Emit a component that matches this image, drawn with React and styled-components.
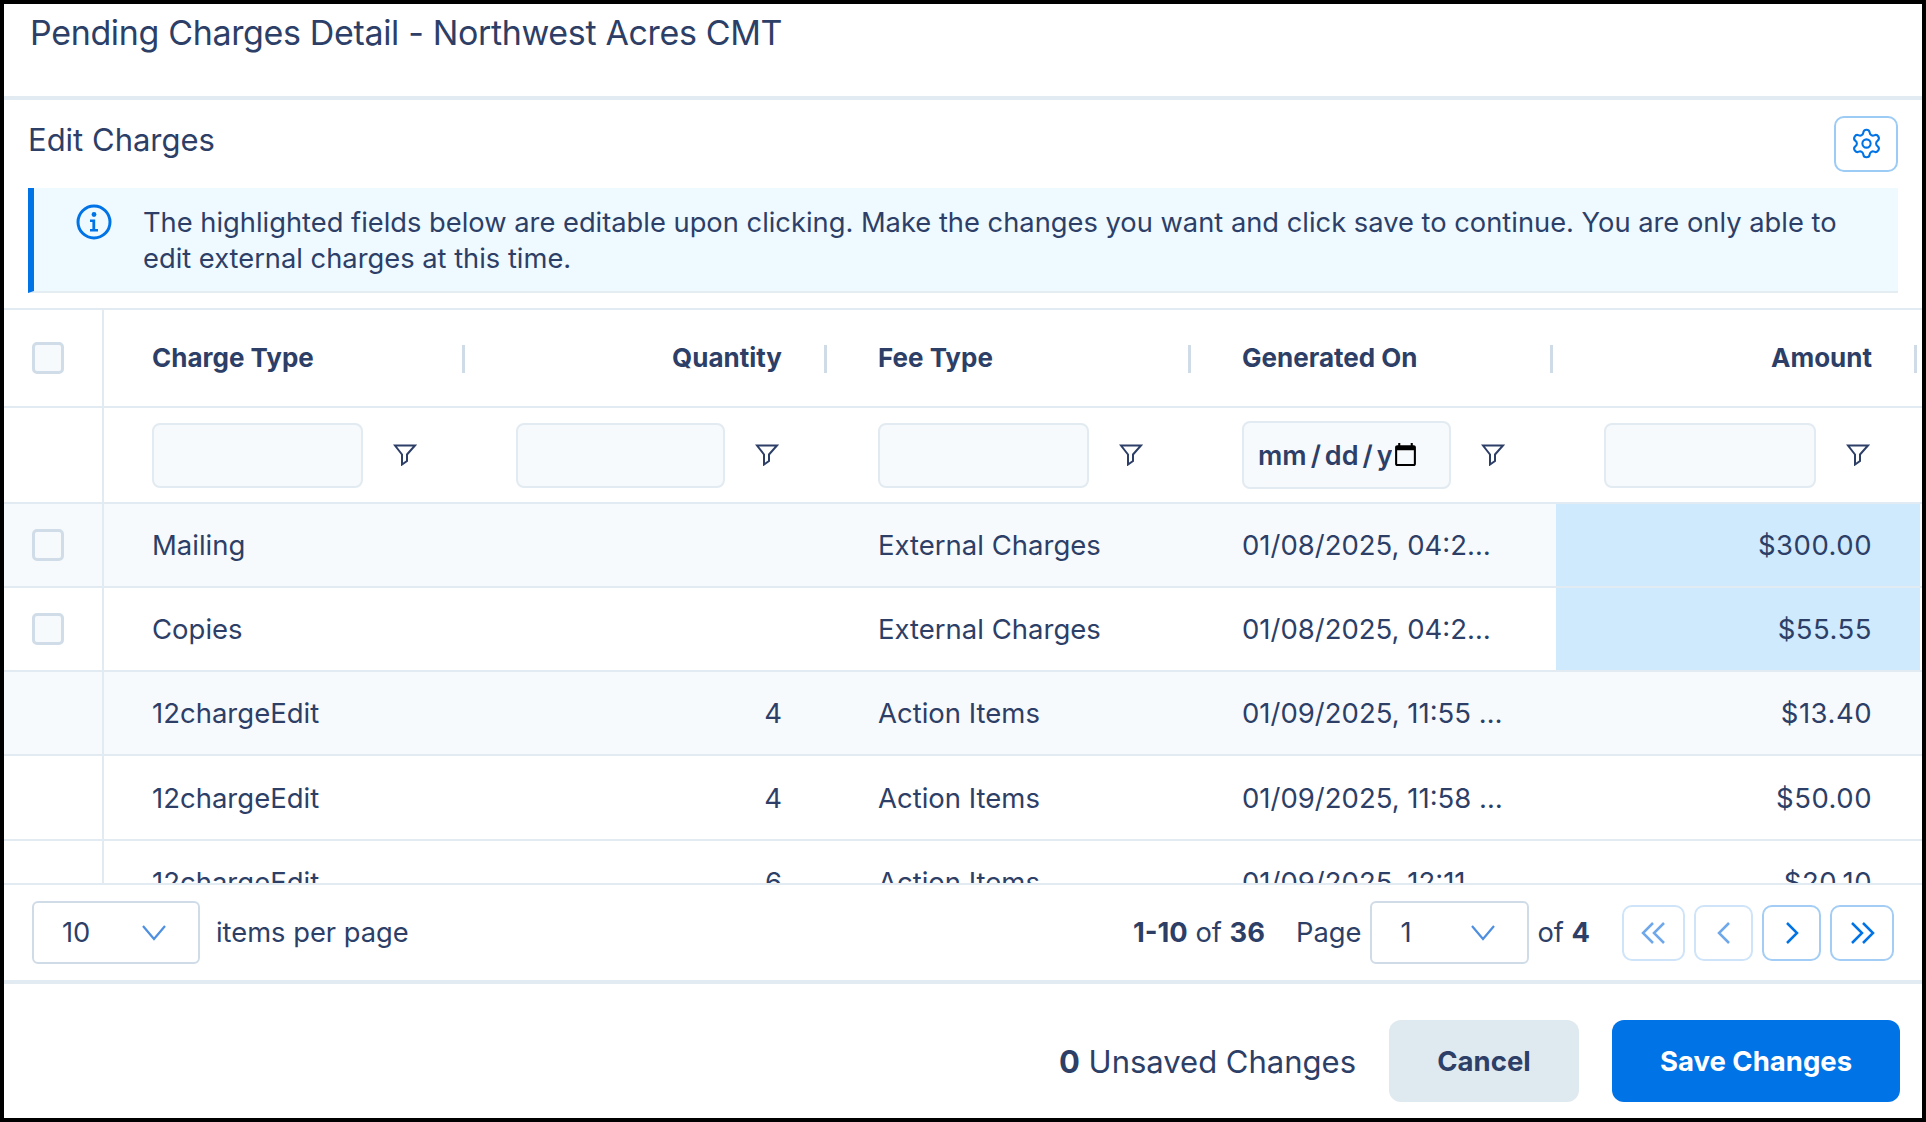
import React from 'react';
import styled, { createGlobalStyle } from 'styled-components';
import { Settings } from 'lucide-react';

const GlobalStyle = createGlobalStyle`
  html, body {
    margin: 0;
    padding: 0;
    background: #000;
  }
  * { box-sizing: border-box; }
`;

const navy = '#2d3f67';
const line = '#e2ebf1';
const blue = '#0073e6';
const COLS = '100px 364px 362px 364px 362px 364px';

const Frame = styled.div`
  width: 1926px;
  height: 1122px;
  border: 4px solid #000;
  background: #fff;
  display: flex;
  flex-direction: column;
  font-family: Inter, 'Liberation Sans', sans-serif;
  color: ${navy};
  overflow: hidden;
`;

const TitleBar = styled.div`
  height: 96px;
  flex: none;
  padding: 9px 0 0 26px;
  border-bottom: 4px solid ${line};
  font-size: 34px;
  line-height: 40px;
  letter-spacing: -0.35px;
`;

const SubHeader = styled.div`
  height: 88px;
  flex: none;
  display: flex;
  justify-content: space-between;
  padding: 16px 24px 0 24px;
`;

const SubTitle = styled.div`
  font-size: 31px;
  line-height: 40px;
  margin-top: 4px;
`;

const GearButton = styled.button`
  width: 64px;
  height: 56px;
  border: 2px solid #9ccbf6;
  border-radius: 10px;
  background: #fff;
  color: ${blue};
  display: flex;
  align-items: center;
  justify-content: center;
  padding: 0 0 2px;
`;

const Banner = styled.div`
  height: 105px;
  flex: none;
  margin: 0 24px 0 24px;
  display: flex;
  background: #eefaff;
  border-left: 6px solid ${blue};
  border-bottom: 2px solid #e4edf2;
  padding: 17px 30px 0 42px;
`;

const BannerIcon = styled.div`
  width: 36px;
  height: 36px;
  margin-top: -1px;
  color: ${blue};
  flex: none;
`;

const BannerText = styled.div`
  margin-left: 31px;
  font-size: 27.3px;
  line-height: 36px;
`;

const Table = styled.div`
  margin-top: 15px;
  flex: none;
  height: 577px;
  display: flex;
  flex-direction: column;
  border-top: 2px solid ${line};
  overflow: hidden;
`;

const HeadRow = styled.div`
  display: grid;
  grid-template-columns: ${COLS};
  height: 98px;
  flex: none;
  border-bottom: 2px solid ${line};
`;

const FilterRow = styled(HeadRow)`
  height: 96px;
`;

const DataRow = styled(HeadRow)`
  height: ${p => p.$h || 84}px;
  background: ${p => (p.$alt ? '#f7fafc' : '#fff')};
`;

const CheckCell = styled.div`
  border-right: 2px solid ${line};
  padding-left: 28px;
  display: flex;
  align-items: center;
`;

const Check = styled.span`
  width: 32px;
  height: 32px;
  border: 3px solid #d0dde8;
  border-radius: 5px;
  background: #f7fafc;
`;

const HeadCell = styled.div`
  position: relative;
  display: flex;
  align-items: center;
  justify-content: ${p => (p.$right ? 'flex-end' : 'flex-start')};
  padding: 0 48px 2px;
  font-size: 26px;
  font-weight: 700;

  &::after {
    content: '';
    position: absolute;
    right: 3px;
    top: 35px;
    height: 28px;
    width: 3px;
    background: #cfdce8;
  }
`;

const FilterCell = styled.div`
  display: flex;
  align-items: center;
  padding-left: 48px;
`;

const FilterInput = styled.input`
  width: ${p => p.$w}px;
  height: 65px;
  border: 2px solid #e2ebf1;
  border-radius: 8px;
  background: #f7fafc;
  outline: none;
`;

const DateInput = styled.input`
  width: 209px;
  height: 68px;
  border: 2px solid #e2ebf1;
  border-radius: 8px;
  background: #f7fafc;
  padding: 0 30px 0 13px;
  font-family: inherit;
  font-size: 27px;
  font-weight: 600;
  color: ${navy};
  outline: none;

  &::-webkit-datetime-edit-text {
    padding: 0 3px;
  }
  &::-webkit-calendar-picker-indicator {
    margin: 0;
    padding: 0;
  }
`;

const FilterBtn = styled.span`
  margin-left: 30px;
  display: flex;
  color: ${navy};
`;

const Cell = styled.div`
  display: flex;
  align-items: center;
  justify-content: ${p => (p.$right ? 'flex-end' : 'flex-start')};
  padding: 0 48px;
  font-size: 27.5px;
  white-space: nowrap;
  overflow: hidden;
  background: ${p => (p.$edit ? '#cfeafd' : 'transparent')};
`;

const AmountCell = styled(Cell)`
  letter-spacing: 0.5px;
`;

const Clip = styled.span`
  display: block;
  width: ${p => p.$w}px;
  overflow: hidden;
  text-overflow: ellipsis;
`;

const Pager = styled.div`
  height: 101px;
  flex: none;
  border-top: 2px solid ${line};
  border-bottom: 4px solid ${line};
  display: flex;
  align-items: center;
  padding: 0 28px;
  font-size: 27.3px;
  margin-top: -2px;
`;

const PageSelect = styled.div`
  width: ${p => p.$w}px;
  height: 63px;
  margin-left: ${p => p.$ml || 0}px;
  border: 2px solid #cfdce8;
  border-radius: 6px;
  display: flex;
  align-items: center;
  justify-content: space-between;
  padding: 0 30px 0 28px;
  color: ${navy};
`;

const PagerLabel = styled.span`
  margin-left: ${p => p.$ml || 0}px;
`;

const Spacer = styled.div`
  flex: 1;
`;

const PageBtn = styled.button`
  width: ${p => p.$w}px;
  height: 56px;
  margin-left: ${p => p.$ml || 9}px;
  border: 2px solid ${p => (p.$dim ? '#cfe4f9' : '#a3cdf5')};
  border-radius: 10px;
  background: #fff;
  color: ${p => (p.$dim ? '#6ea8ea' : blue)};
  display: flex;
  align-items: center;
  justify-content: center;
  padding: 0;
`;

const Actions = styled.div`
  flex: 1;
  display: flex;
  align-items: center;
  justify-content: flex-end;
  padding: 20px 22px 0 0;
  font-size: 31px;
`;

const ActionBtn = styled.button`
  height: 82px;
  width: ${p => p.$w}px;
  border: none;
  border-radius: 12px;
  font-family: inherit;
  font-size: 27.5px;
  font-weight: 700;
  margin-left: ${p => p.$ml}px;
  background: ${p => (p.$primary ? blue : '#dfe9f0')};
  color: ${p => (p.$primary ? '#fff' : navy)};
`;

const Funnel = () => (
  <svg width="24" height="22" viewBox="0 0 24 22" fill="none" stroke="currentColor" strokeWidth="2" strokeLinejoin="miter">
    <path d="M2 1.5h20l-8 9v6.5l-5 3.5v-10z" />
  </svg>
);

const DownChevron = () => (
  <svg width="28" height="20" viewBox="0 0 26 20" fill="none" stroke="currentColor" strokeWidth="2.2">
    <path d="M2 3l11 13L24 3" />
  </svg>
);

const chevrons = {
  first: ['M12 3L2 13l10 10', 'M23 3L13 13l10 10'],
  prev: ['M14 3L4 13l10 10'],
  next: ['M4 3l10 10-10 10'],
  last: ['M3 3l10 10-10 10', 'M14 3l10 10-10 10'],
};

const PageIcon = ({ name }) => {
  const wide = name === 'first' || name === 'last';
  return (
    <svg width={wide ? 26 : 18} height="26" viewBox={wide ? '0 0 26 26' : '0 0 18 26'} fill="none" stroke="currentColor" strokeWidth="2.5">
      {chevrons[name].map(d => <path key={d} d={d} />)}
    </svg>
  );
};

const DownArrow = styled.span`
  display: flex;
  color: #4f8fe0;
`;

const InfoIcon = () => (
  <svg width="36" height="36" viewBox="0 0 36 36" fill="none">
    <circle cx="18" cy="18" r="16" stroke="currentColor" strokeWidth="3" />
    <circle cx="18" cy="10.5" r="2.4" fill="currentColor" />
    <path d="M14 15.5h5.2v9.5H22v2.5h-8V25h2.4v-7H14z" fill="currentColor" />
  </svg>
);

const rows = [
  { check: true, alt: true, type: 'Mailing', qty: '', fee: 'External Charges', date: '01/08/2025, 04:21:37 PM', clip: 254, amount: '$300.00', edit: true },
  { check: true, type: 'Copies', qty: '', fee: 'External Charges', date: '01/08/2025, 04:21:37 PM', clip: 254, amount: '$55.55', edit: true },
  { alt: true, type: '12chargeEdit', qty: '4', fee: 'Action Items', date: '01/09/2025, 11:55 AM EST', clip: 262, amount: '$13.40' },
  { type: '12chargeEdit', qty: '4', fee: 'Action Items', date: '01/09/2025, 11:58 AM EST', clip: 262, amount: '$50.00', h: 85 },
  { type: '12chargeEdit', qty: '6', fee: 'Action Items', date: '01/09/2025, 12:11 PM EST', clip: 262, amount: '$20.10' },
];

const heads = [
  { label: 'Charge Type', w: 211 },
  { label: 'Quantity', right: true, w: 209 },
  { label: 'Fee Type', w: 211 },
  { label: 'Generated On' },
  { label: 'Amount', right: true, w: 212 },
];

export default function App() {
  return (
    <>
      <GlobalStyle />
      <Frame>
        <TitleBar>Pending Charges Detail - Northwest Acres CMT</TitleBar>
        <SubHeader>
          <SubTitle>Edit Charges</SubTitle>
          <GearButton><Settings size={33} strokeWidth={1.5} /></GearButton>
        </SubHeader>
        <Banner>
          <BannerIcon><InfoIcon /></BannerIcon>
          <BannerText>
            The highlighted fields below are editable upon clicking. Make the changes you want and click save to continue. You are only able to edit external charges at this time.
          </BannerText>
        </Banner>
        <Table>
          <HeadRow>
            <CheckCell><Check /></CheckCell>
            {heads.map(h => <HeadCell key={h.label} $right={h.right}>{h.label}</HeadCell>)}
          </HeadRow>
          <FilterRow>
            <CheckCell />
            {heads.map(h => (
              <FilterCell key={h.label}>
                {h.label === 'Generated On' ? <DateInput type="date" /> : <FilterInput $w={h.w} />}
                <FilterBtn><Funnel /></FilterBtn>
              </FilterCell>
            ))}
          </FilterRow>
          {rows.map((r, i) => (
            <DataRow key={i} $alt={r.alt} $h={r.h}>
              <CheckCell>{r.check && <Check />}</CheckCell>
              <Cell>{r.type}</Cell>
              <Cell $right>{r.qty}</Cell>
              <Cell>{r.fee}</Cell>
              <Cell><Clip $w={r.clip}>{r.date}</Clip></Cell>
              <AmountCell $right $edit={r.edit}>{r.amount}</AmountCell>
            </DataRow>
          ))}
        </Table>
        <Pager>
          <PageSelect $w={168}>10<DownArrow><DownChevron /></DownArrow></PageSelect>
          <PagerLabel $ml={16}>items per page</PagerLabel>
          <Spacer />
          <span><b>1-10</b> of <b>36</b></span>
          <PagerLabel $ml={31}>Page</PagerLabel>
          <PageSelect $w={159} $ml={9}>1<DownArrow><DownChevron /></DownArrow></PageSelect>
          <PagerLabel $ml={8}>of <b>4</b></PagerLabel>
          <PageBtn $w={63} $ml={32} $dim><PageIcon name="first" /></PageBtn>
          <PageBtn $w={59} $dim><PageIcon name="prev" /></PageBtn>
          <PageBtn $w={59}><PageIcon name="next" /></PageBtn>
          <PageBtn $w={64}><PageIcon name="last" /></PageBtn>
        </Pager>
        <Actions>
          <span><b>0</b> Unsaved Changes</span>
          <ActionBtn $w={190} $ml={33}>Cancel</ActionBtn>
          <ActionBtn $w={288} $ml={33} $primary>Save Changes</ActionBtn>
        </Actions>
      </Frame>
    </>
  );
}
